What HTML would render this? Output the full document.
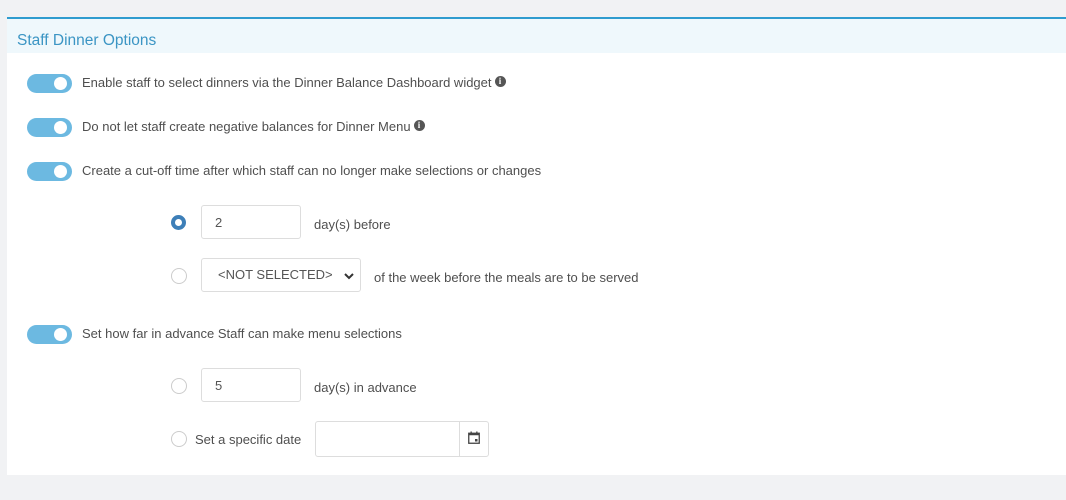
<!DOCTYPE html>
<html><head><style>
body{margin:0;width:1066px;height:500px;background:#f1f2f4;font-family:"Liberation Sans",sans-serif;position:relative;overflow:hidden}
.panel{position:absolute;left:7px;top:17px;width:1059px;height:456px;background:#fff;border-top:2px solid #2f9ccf}
.hdr{position:absolute;left:0;top:0;width:100%;height:34px;background:#eff8fc;}
.hdr span{position:absolute;left:10px;top:13px;font-size:15.5px;color:#3b95c4}
.t{position:absolute;left:27px;width:45px;height:19px;border-radius:10px;background:#6cb9e1}
.t::after{content:"";position:absolute;right:5px;top:3px;width:13px;height:13px;border-radius:50%;background:#fff}
.l{position:absolute;font-size:13px;color:#4f4f4f;line-height:15px}
.i{position:relative;top:-2px;display:inline-block;width:11px;height:11px;border-radius:50%;background:#555;color:#fff;font-size:9px;font-weight:bold;text-align:center;line-height:11px;vertical-align:middle;font-family:"Liberation Serif",serif;margin-left:3px}
.r{position:absolute;left:171px;width:14px;height:14px;border:1px solid #ccc;border-radius:50%;background:#fff}
.r.on{border:4px solid #3d7fb8;width:7px;height:7px;}
.in{position:absolute;border:1px solid #ddd;border-radius:3px;background:#fff;font-size:13px;color:#555;box-sizing:border-box}
</style></head><body>
<div class="panel"><div class="hdr"><span>Staff Dinner Options</span></div></div>
<div class="t" style="top:74px"></div><div class="l" style="left:82px;top:75px">Enable staff to select dinners via the Dinner Balance Dashboard widget<span class="i">i</span></div>
<div class="t" style="top:118px"></div><div class="l" style="left:82px;top:119px">Do not let staff create negative balances for Dinner Menu<span class="i">i</span></div>
<div class="t" style="top:162px"></div><div class="l" style="left:82px;top:163px">Create a cut-off time after which staff can no longer make selections or changes</div>
<div class="r on" style="top:215px"></div>
<div class="in" style="left:201px;top:205px;width:100px;height:34px;padding:9px 0 0 13px">2</div>
<div class="l" style="left:314px;top:217px">day(s) before</div>
<div class="r" style="top:268px"></div>
<div class="in" style="left:201px;top:258px;width:160px;height:34px;padding:8px 0 0 16px">&lt;NOT SELECTED&gt;<svg style="position:absolute;right:6px;top:14px" width="10" height="7" viewBox="0 0 10 7"><path d="M1 1l4 4 4-4" stroke="#333" stroke-width="2" fill="none"/></svg></div>
<div class="l" style="left:374px;top:270px">of the week before the meals are to be served</div>
<div class="t" style="top:325px"></div><div class="l" style="left:82px;top:326px">Set how far in advance Staff can make menu selections</div>
<div class="r" style="top:378px"></div>
<div class="in" style="left:201px;top:368px;width:100px;height:34px;padding:9px 0 0 13px">5</div>
<div class="l" style="left:314px;top:380px">day(s) in advance</div>
<div class="r" style="top:431px"></div>
<div class="l" style="left:195px;top:432px">Set a specific date</div>
<div class="in" style="left:315px;top:421px;width:174px;height:36px"><div style="position:absolute;left:143px;top:0;width:1px;height:34px;background:#ddd"></div>
<svg style="position:absolute;left:152px;top:9px" width="12" height="13" viewBox="0 0 12 13"><rect x="0.75" y="2.25" width="10.5" height="10" fill="none" stroke="#444" stroke-width="1.3"/><rect x="0.75" y="2.25" width="10.5" height="2" fill="#444"/><rect x="2.5" y="0.5" width="1.3" height="2.5" fill="#444"/><rect x="8.2" y="0.5" width="1.3" height="2.5" fill="#444"/><rect x="7" y="8" width="2.5" height="2.5" fill="#444"/></svg></div>
</body></html>
